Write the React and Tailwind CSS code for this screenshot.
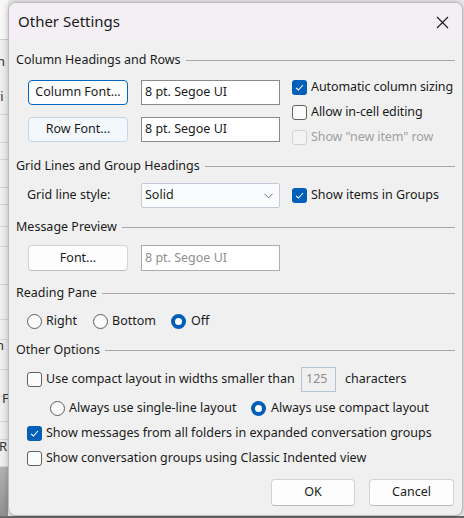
import React from "react";

function Check({ checked, disabled }) {
  if (checked)
    return (
      <span className="w-[15px] h-[15px] rounded-[3px] bg-[#005fb8] flex items-center justify-center shrink-0">
        <svg width="11" height="11" viewBox="0 0 11 11">
          <path d="M2 5.8 L4.4 8 L9 3" stroke="white" strokeWidth="1.1" fill="none" />
        </svg>
      </span>
    );
  return (
    <span
      className={
        disabled
          ? "w-[15px] h-[15px] rounded-[3px] border border-[#d2d2d2] bg-[#f3f3f3] shrink-0"
          : "w-[15px] h-[15px] rounded-[3px] border border-[#616161] bg-[#fbfbfb] shrink-0"
      }
    />
  );
}

function Radio({ checked }) {
  if (checked)
    return (
      <span className="w-[15px] h-[15px] rounded-full bg-[#005fb8] flex items-center justify-center shrink-0">
        <span className="w-[7px] h-[7px] rounded-full bg-white" />
      </span>
    );
  return <span className="w-[15px] h-[15px] rounded-full border border-[#5d5d5d] bg-[#fbfbfb] shrink-0" />;
}

function Header({ children }) {
  return (
    <div className="flex items-center h-[16px]">
      <span className="whitespace-nowrap">{children}</span>
      <span className="flex-1 h-px bg-[#a8a8a8] ml-[5px]" />
    </div>
  );
}

function CheckRow({ checked, disabled, children, className = "" }) {
  return (
    <div className={"flex items-center gap-[4px] " + className}>
      <Check checked={checked} disabled={disabled} />
      <span className={disabled ? "text-[#a0a0a0] whitespace-nowrap" : "whitespace-nowrap"}>{children}</span>
    </div>
  );
}

function Row({ h, children }) {
  return <div className={"relative bg-[#eeeeee] border-b border-[#d6d6d6] " + h}>{children}</div>;
}

export default function App() {
  return (
    <div className="relative w-[464px] h-[518px] overflow-hidden bg-[#ebebeb] font-['Noto_Sans',sans-serif] text-[12.5px] text-[#1b1b1b]">
      {/* background app strip */}
      <div className="flex flex-col w-[8px] h-full text-[13px] text-[#333]">
        <div className="h-[40px] bg-[#f8f8f8] border-b border-[#d0d0d0]" />
        <Row h="h-[75px]">
          <span className="absolute left-[-3px] top-[12px]">n</span>
          <span className="absolute left-[-5px] top-[47px]">ri</span>
        </Row>
        <Row h="h-[28px]" />
        <Row h="h-[17px]" />
        <Row h="h-[28px]" />
        <Row h="h-[17px]" />
        <Row h="h-[22px]" />
        <Row h="h-[20px]" />
        <Row h="h-[38px]" />
        <Row h="h-[35px]" />
        <Row h="h-[20px]" />
        <Row h="h-[30px]">
          <span className="absolute left-[-4px] top-[-4px]">n</span>
        </Row>
        <Row h="h-[27px]" />
        <Row h="h-[25px]">
          <span className="absolute left-[2px] top-[-8px]">F</span>
        </Row>
        <Row h="h-[18px]" />
        <Row h="h-[27px]">
          <span className="absolute left-[-1px] top-[-3px]">R</span>
        </Row>
        <div className="flex-1 bg-gradient-to-b from-[#b4b4b4] to-[#8e8e8e]" />
      </div>
      <div className="absolute left-0 right-0 bottom-0 h-[2px] bg-[#6a6a6a]" />

      {/* dialog */}
      <div className="absolute left-[8px] top-[2px] w-[455px] h-[514px] rounded-[8px] border border-[#bcbcbc] bg-[#f0f0f0] overflow-hidden shadow-[0_0_6px_rgba(0,0,0,0.25)] flex flex-col">
        <div className="h-[38px] bg-[#f3eff5] flex items-center justify-between pl-[9px] pr-[13px] shrink-0">
          <span className="text-[15px] text-[#1a1a1a] mt-[-1px]">Other Settings</span>
          <svg width="13" height="13" viewBox="0 0 13 13">
            <path d="M1 1 L12 12 M12 1 L1 12" stroke="#1a1a1a" strokeWidth="1.1" />
          </svg>
        </div>

        <div className="flex flex-col pl-[7px] pr-[7px]">
          {/* Column Headings and Rows */}
          <div className="mt-[11px]">
            <Header>Column Headings and Rows</Header>
          </div>
          <div className="flex">
            <div className="flex flex-col gap-[12px] mt-[12px] pl-[12px]">
              <div className="flex items-center">
                <div className="w-[100px] h-[25px] rounded-[4px] border border-[#0067c0] bg-[#fdfdfd] flex items-center justify-center">
                  Column Font...
                </div>
                <div className="ml-[13px] w-[139px] h-[25px] border border-[#8a8a8a] bg-white flex items-center pl-[3px]">
                  8 pt. Segoe UI
                </div>
              </div>
              <div className="flex items-center">
                <div className="w-[100px] h-[25px] rounded-[4px] border border-[#c4d7ea] bg-[#f3f8fc] flex items-center justify-center">
                  Row Font...
                </div>
                <div className="ml-[13px] w-[139px] h-[25px] border border-[#8a8a8a] bg-white flex items-center pl-[3px]">
                  8 pt. Segoe UI
                </div>
              </div>
            </div>
            <div className="flex flex-col mt-[7px] ml-[12px] tracking-[-0.1px]">
              <CheckRow checked className="h-[25px]">Automatic column sizing</CheckRow>
              <CheckRow className="h-[25px]">Allow in-cell editing</CheckRow>
              <CheckRow disabled className="h-[25px]">Show "new item" row</CheckRow>
            </div>
          </div>

          {/* Grid Lines */}
          <div className="mt-[8px]">
            <Header>Grid Lines and Group Headings</Header>
          </div>
          <div className="flex items-center mt-[9px] h-[25px]">
            <span className="w-[125px] pl-[11px]">Grid line style:</span>
            <div className="w-[139px] h-[25px] border border-[#c2cbd6] bg-[#f9fbfd] rounded-[2px] flex items-center justify-between pl-[3px] pr-[6px]">
              <span>Solid</span>
              <svg width="9" height="6" viewBox="0 0 9 6">
                <path d="M0.5 0.8 L4.5 4.8 L8.5 0.8" stroke="#6b6b6b" strokeWidth="1" fill="none" />
              </svg>
            </div>
            <CheckRow checked className="ml-[12px]">Show items in Groups</CheckRow>
          </div>

          {/* Message Preview */}
          <div className="mt-[11px]">
            <Header>Message Preview</Header>
          </div>
          <div className="flex items-center mt-[10px] pl-[12px]">
            <div className="w-[100px] h-[26px] rounded-[4px] border border-[#d3d3d3] border-b-[#bdbdbd] bg-[#fdfdfd] flex items-center justify-center">
              Font...
            </div>
            <div className="ml-[13px] w-[139px] h-[26px] border border-[#adadad] bg-white flex items-center pl-[3px] text-[#909090]">
              8 pt. Segoe UI
            </div>
          </div>

          {/* Reading Pane */}
          <div className="mt-[14px]">
            <Header>Reading Pane</Header>
          </div>
          <div className="flex items-center mt-[10px] h-[20px] pl-[11px]">
            <div className="flex items-center gap-[4px] w-[66px]">
              <Radio />
              <span>Right</span>
            </div>
            <div className="flex items-center gap-[4px] w-[78px]">
              <Radio />
              <span>Bottom</span>
            </div>
            <div className="flex items-center gap-[5px]">
              <Radio checked />
              <span>Off</span>
            </div>
          </div>

          {/* Other Options */}
          <div className="mt-[11px]">
            <Header>Other Options</Header>
          </div>
          <div className="flex items-center mt-[9px] h-[25px]">
            <div className="w-[285px] pl-[11px] shrink-0">
              <CheckRow>Use compact layout in widths smaller than</CheckRow>
            </div>
            <div className="w-[35px] h-[25px] border border-[#b5c3d4] bg-[#f0f0f0] flex items-center pl-[4px] text-[#8d8d8d]">
              125
            </div>
            <span className="ml-[9px]">characters</span>
          </div>
          <div className="flex items-center mt-[6px] h-[20px] pl-[34px]">
            <div className="flex items-center gap-[4px] w-[201px]">
              <Radio />
              <span className="whitespace-nowrap">Always use single-line layout</span>
            </div>
            <div className="flex items-center gap-[5px]">
              <Radio checked />
              <span className="whitespace-nowrap">Always use compact layout</span>
            </div>
          </div>
          <CheckRow checked className="mt-[5px] h-[20px] pl-[11px]">
            Show messages from all folders in expanded conversation groups
          </CheckRow>
          <CheckRow className="mt-[5px] h-[20px] pl-[11px]">
            Show conversation groups using Classic Indented view
          </CheckRow>

          {/* buttons */}
          <div className="flex justify-end gap-[14px] mt-[11px] pr-[1px]">
            <div className="w-[84px] h-[27px] rounded-[4px] border border-[#d3d3d3] border-b-[#bdbdbd] bg-[#fdfdfd] flex items-center justify-center">
              OK
            </div>
            <div className="w-[85px] h-[27px] rounded-[4px] border border-[#d3d3d3] border-b-[#bdbdbd] bg-[#fdfdfd] flex items-center justify-center">
              Cancel
            </div>
          </div>
        </div>
      </div>
    </div>
  );
}
